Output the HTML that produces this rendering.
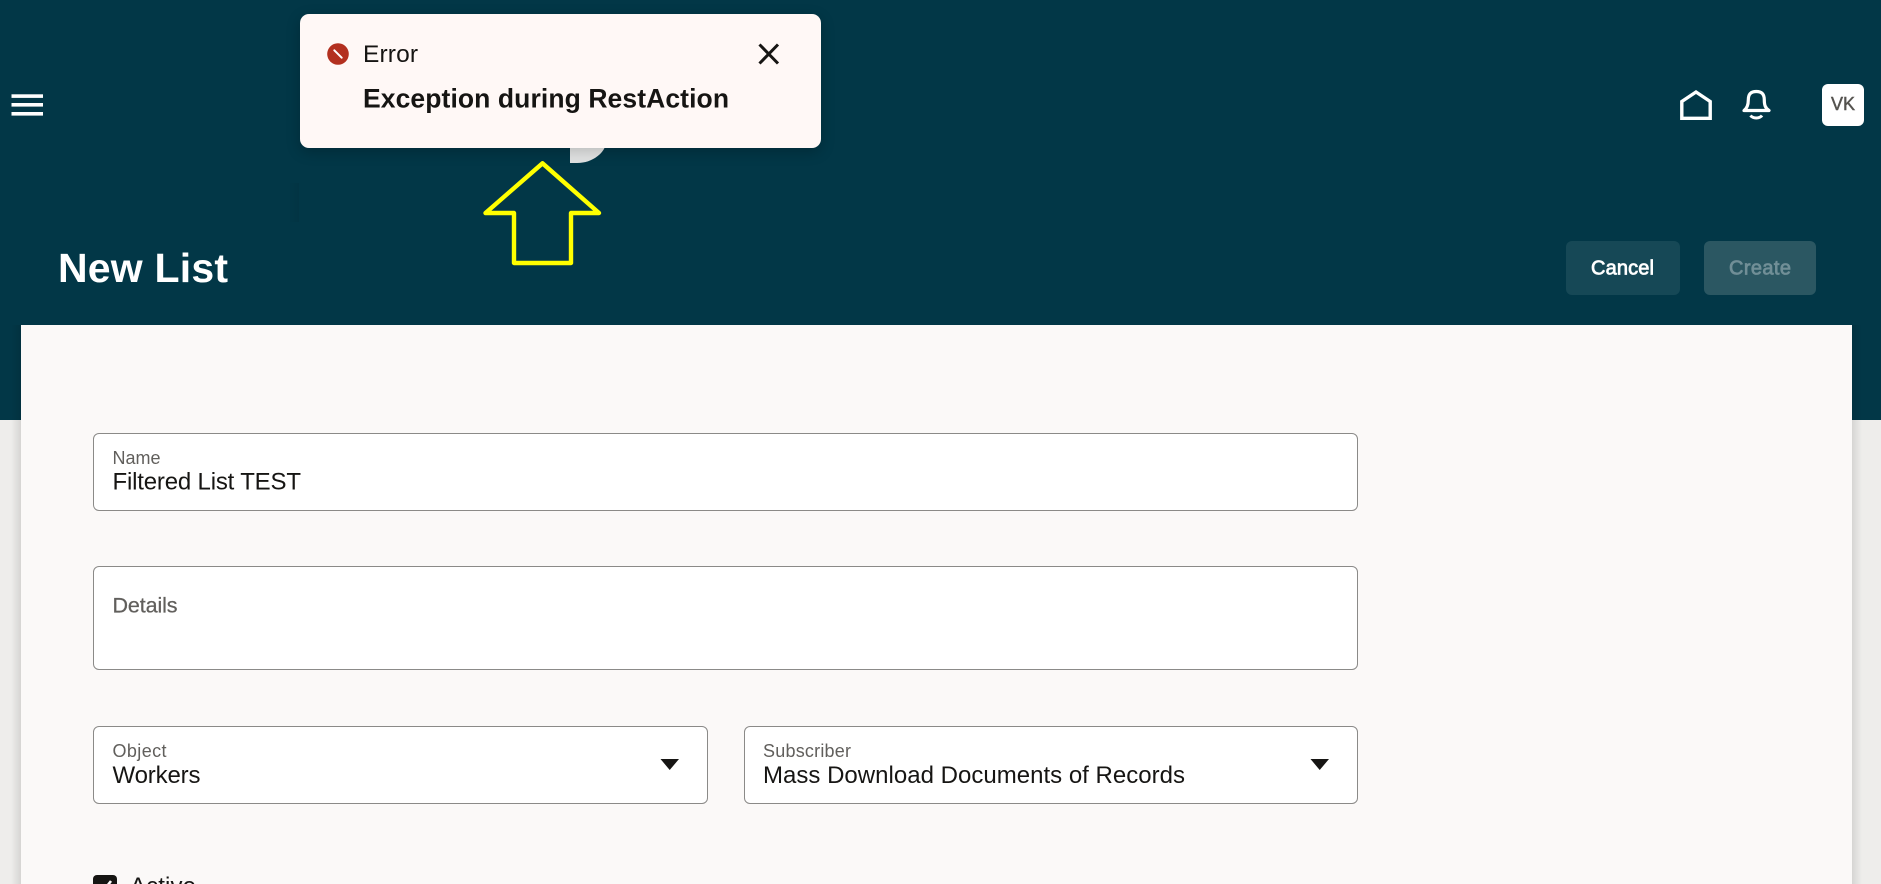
<!DOCTYPE html>
<html lang="en">
<head>
<meta charset="utf-8">
<title>New List</title>
<style>
html,body{margin:0;padding:0;width:1881px;height:884px;overflow:hidden;background:#eeedeb;font-family:"Liberation Sans",sans-serif}
#page{position:relative;width:1881px;height:884px;overflow:hidden;background:#eeedeb}
.abs{position:absolute}
#hdr{left:0;top:0;width:1881px;height:420px;background:#023747}
#card{left:21px;top:325px;width:1831px;height:559px;background:#fbf9f8}
.field{box-sizing:border-box;background:#fff;border:1.2px solid #8b8a88;border-radius:6px}
.btn{border-radius:6px}
#toast{left:300px;top:14px;width:521px;height:134px;background:#fff8f6;border-radius:9px;box-shadow:0 4px 14px rgba(0,0,0,.22)}
#avatar{left:1822px;top:84px;width:42px;height:42px;background:#fff;border-radius:6px}
svg{position:absolute;left:0;top:0}
text{font-family:"Liberation Sans",sans-serif}
</style>
</head>
<body>
<div id="page">
<div class="abs" id="hdr"></div>
<div class="abs" style="left:288px;top:183px;width:11px;height:39px;background:linear-gradient(90deg,rgba(0,0,0,0),rgba(0,0,0,.06))"></div>
<div class="abs" style="left:570px;top:135px;width:37px;height:28px;background:linear-gradient(180deg,#f4f4f3,#dfe1e1);border-radius:0 0 30px 0/0 0 25px 0"></div>
<div class="abs" style="left:11px;top:325px;width:10px;height:559px;background:linear-gradient(90deg,rgba(0,0,0,0),rgba(0,0,0,.1))"></div>
<div class="abs" style="left:1852px;top:325px;width:10px;height:559px;background:linear-gradient(270deg,rgba(0,0,0,0),rgba(0,0,0,.1))"></div>
<div class="abs" id="card"></div>
<div class="abs btn" style="left:1566px;top:241px;width:114px;height:54px;background:#164856"></div>
<div class="abs btn" style="left:1704px;top:241px;width:112px;height:54px;background:#2b5762"></div>
<div class="abs" id="avatar"></div>
<div class="abs field" style="left:93px;top:433px;width:1265px;height:78px"></div>
<div class="abs field" style="left:93px;top:566px;width:1265px;height:104px"></div>
<div class="abs field" style="left:93px;top:726px;width:615px;height:78px"></div>
<div class="abs field" style="left:744px;top:726px;width:614px;height:78px"></div>
<div class="abs" style="left:93px;top:875px;width:24px;height:24px;background:#161513;border-radius:4px"></div>
<div class="abs" id="toast"></div>

<svg width="1881" height="884" viewBox="0 0 1881 884">
  <!-- hamburger -->
  <rect x="11.5" y="94.3" width="31.5" height="3.6" fill="#fff"/>
  <rect x="11.5" y="103" width="31.5" height="3.6" fill="#fff"/>
  <rect x="11.5" y="112" width="31.5" height="3.6" fill="#fff"/>

  <!-- toast content -->
  <circle cx="338" cy="54" r="10.8" fill="#b3301f"/>
  <path d="M334.3 50.3L341.7 57.7" stroke="#fff" stroke-width="2" stroke-linecap="round" fill="none"/>
  <text x="363" y="62" font-size="24.5" fill="#161513" textLength="55" lengthAdjust="spacing">Error</text>
  <text x="363" y="107.5" font-size="26.5" font-weight="700" fill="#161513" textLength="366" lengthAdjust="spacing">Exception during RestAction</text>
  <path d="M759.5 44.5L778 63.5M778 44.5L759.5 63.5" stroke="#161513" stroke-width="3" fill="none"/>

  <!-- annotation arrow -->
  <path d="M542.5 163.3L485.5 213H514V263H571V213H599Z" fill="none" stroke="#ffff00" stroke-width="4.4" stroke-linejoin="round"/>

  <!-- header icons -->
  <path d="M1681.8 118.3V101.5L1696 92L1710.2 101.5V118.3Z" fill="none" stroke="#fff" stroke-width="3.4"/>
  <path d="M1744 110.5C1747.5 108 1748.3 104.5 1748.3 100C1748.3 94 1751 91.5 1756.3 91.5C1761.6 91.5 1764.3 94 1764.3 100C1764.3 104.5 1765 108 1769 110.5Z" fill="none" stroke="#fff" stroke-width="3.2" stroke-linejoin="round"/>
  <path d="M1750.5 115.5C1753 118.8 1759.5 118.8 1762 115.5" fill="none" stroke="#fff" stroke-width="3"/>
  <text x="1831" y="110" font-size="18" fill="#55534f" stroke="#55534f" stroke-width=".45" textLength="24" lengthAdjust="spacing">VK</text>

  <!-- title and actions -->
  <text x="58" y="282" font-size="41" font-weight="700" fill="#fff" textLength="170" lengthAdjust="spacing">New List</text>
  <text x="1591" y="274.5" font-size="20" fill="#fff" stroke="#fff" stroke-width=".75" textLength="63" lengthAdjust="spacing">Cancel</text>
  <text x="1729" y="274.5" font-size="20" fill="#718f97" stroke="#718f97" stroke-width=".75" textLength="62" lengthAdjust="spacing">Create</text>

  <!-- form -->
  <text x="112.5" y="464" font-size="18" fill="#615f5c" textLength="48" lengthAdjust="spacing">Name</text>
  <text x="112.5" y="489.5" font-size="24" fill="#161513" textLength="188.5" lengthAdjust="spacing">Filtered List TEST</text>
  <text x="112.5" y="612.5" font-size="21.5" fill="#615f5c" stroke="#615f5c" stroke-width=".25" textLength="65" lengthAdjust="spacing">Details</text>
  <text x="112.5" y="757" font-size="18" fill="#615f5c" textLength="54" lengthAdjust="spacing">Object</text>
  <text x="112.5" y="783" font-size="24" fill="#161513" textLength="88" lengthAdjust="spacing">Workers</text>
  <text x="763" y="757" font-size="18" fill="#615f5c" textLength="88" lengthAdjust="spacing">Subscriber</text>
  <text x="763" y="783" font-size="24" fill="#161513" textLength="422" lengthAdjust="spacing">Mass Download Documents of Records</text>
  <path d="M660.5 759H679L669.7 770Z" fill="#161513"/>
  <path d="M1310.5 759H1329L1319.7 770Z" fill="#161513"/>
  <path d="M100 886L104 890L111 881" fill="none" stroke="#fff" stroke-width="2.6"/>
  <text x="130" y="894" font-size="24" fill="#161513" textLength="66" lengthAdjust="spacing">Active</text>
</svg>
</div>
</body>
</html>
